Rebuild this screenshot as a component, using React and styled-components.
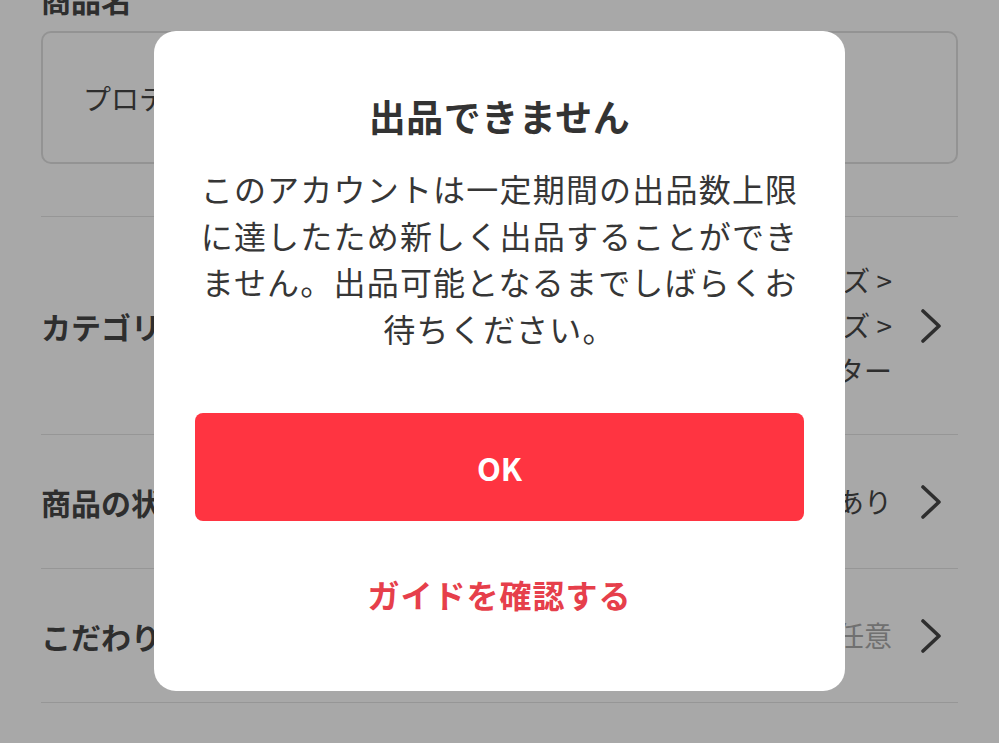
import React from 'react';
import styled, { createGlobalStyle } from 'styled-components';

const GlobalStyle = createGlobalStyle`
    html, body {
        margin: 0;
        padding: 0;
        background: #ffffff;
        overflow: hidden;
    }
    body {
        font-family: "Noto Sans CJK JP", "Noto Sans", sans-serif;
        color: #474747;
    }
`;

const Page = styled.div`
    width: 999px;
    height: 743px;
    overflow: hidden;
`;

const Form = styled.div`
    margin-top: -16px;
    padding: 0 41px 0 41px;
`;

const FieldLabel = styled.div`
    font-size: 30px;
    font-weight: 700;
    line-height: 30px;
    color: #474747;
`;

const InputBox = styled.div`
    margin-top: 17px;
    height: 129px;
    border: 2px solid #e0e0e0;
    border-radius: 10px;
    display: flex;
    align-items: center;
    padding-left: 40px;
    font-size: 28px;
    color: #474747;
    white-space: nowrap;
    overflow: hidden;
`;

const List = styled.div`
    margin-top: 52px;
    border-top: 1px solid #e4e4e4;
`;

const Row = styled.div`
    display: flex;
    align-items: center;
    min-height: 134px;
    padding: ${(p) => (p.$tall ? '41px' : '0')} 16px ${(p) => (p.$tall ? '41px' : '0')} 0;
    border-bottom: 1px solid #e4e4e4;
    box-sizing: border-box;
`;

const RowLabel = styled.div`
    font-size: 30px;
    font-weight: 700;
    color: #474747;
    white-space: nowrap;
`;

const RowValue = styled.div`
    margin-left: auto;
    text-align: right;
    font-size: 28px;
    line-height: 45px;
    color: ${(p) => (p.$muted ? '#aaaaaa' : '#474747')};
    white-space: nowrap;
`;

const Chevron = styled.svg`
    flex: none;
    width: 22px;
    height: 34px;
    margin-left: 28px;
`;

const Overlay = styled.div`
    position: fixed;
    inset: 0;
    background: rgba(0, 0, 0, 0.34);
    display: flex;
    justify-content: center;
    align-items: flex-start;
    padding-top: 31px;
`;

const Dialog = styled.div`
    width: 691px;
    height: 660px;
    box-sizing: border-box;
    background: #ffffff;
    border-radius: 22px;
    padding: 60px 41px 0;
    display: flex;
    flex-direction: column;
    align-items: stretch;
`;

const Title = styled.h2`
    margin: 0;
    text-align: center;
    font-size: 37px;
    line-height: 50px;
    font-weight: 700;
    letter-spacing: 0.5px;
    color: #333333;
`;

const Message = styled.p`
    margin: 24px 0 0;
    text-align: center;
    font-size: 32px;
    line-height: 46.5px;
    letter-spacing: 1.2px;
    color: #363636;
`;

const PrimaryButton = styled.button`
    margin-top: 62px;
    height: 108px;
    border: none;
    border-radius: 8px;
    background: #ff3441;
    color: #ffffff;
    font-family: "Noto Sans CJK JP", "Noto Sans", sans-serif;
    font-size: 31px;
    font-weight: 700;
    cursor: pointer;
`;

const LinkButton = styled.button`
    margin-top: 48px;
    height: 50px;
    border: none;
    background: transparent;
    color: #e63f4b;
    font-family: "Noto Sans CJK JP", "Noto Sans", sans-serif;
    font-size: 32px;
    font-weight: 700;
    letter-spacing: 1px;
    cursor: pointer;
`;

const ChevronIcon = () => (
    <Chevron viewBox="0 0 22 34">
        <path d="M3 2 L19 17 L3 32" fill="none" stroke="#474747" strokeWidth="3.6" strokeLinecap="round" strokeLinejoin="round" />
    </Chevron>
);

const App = () => {
    return (
        <Page>
            <GlobalStyle />
            <Form>
                <FieldLabel>商品名</FieldLabel>
                <InputBox>プロテイン シェイカー 600ml</InputBox>
                <List>
                    <Row $tall>
                        <RowLabel>カテゴリー</RowLabel>
                        <RowValue>
                            おもちゃ・ホビー・グッズ &gt;<br />
                            キャラクターグッズ &gt;<br />
                            ポスター
                        </RowValue>
                        <ChevronIcon />
                    </Row>
                    <Row>
                        <RowLabel>商品の状態</RowLabel>
                        <RowValue>やや傷や汚れあり</RowValue>
                        <ChevronIcon />
                    </Row>
                    <Row>
                        <RowLabel>こだわりポイント</RowLabel>
                        <RowValue $muted>任意</RowValue>
                        <ChevronIcon />
                    </Row>
                </List>
            </Form>
            <Overlay>
                <Dialog>
                    <Title>出品できません</Title>
                    <Message>
                        このアカウントは一定期間の出品数上限に達したため新しく出品することができません。出品可能となるまでしばらくお待ちください。
                    </Message>
                    <PrimaryButton>OK</PrimaryButton>
                    <LinkButton>ガイドを確認する</LinkButton>
                </Dialog>
            </Overlay>
        </Page>
    );
};

export default App;
